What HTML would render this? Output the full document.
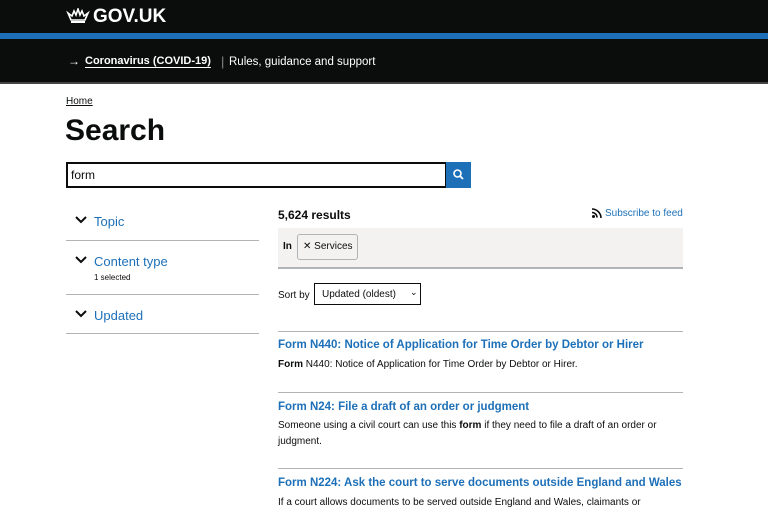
<!DOCTYPE html>
<html><head><style>
*{margin:0;padding:0;box-sizing:border-box}
body{width:768px;height:512px;overflow:hidden;background:#fff;font-family:"Liberation Sans",sans-serif;color:#0b0c0c;position:relative}
.a{position:absolute;white-space:nowrap}
.l{color:#1d70b8}
</style></head><body>
<div class="a" style="left:0;top:0;width:768px;height:33px;background:#0b0c0c"></div>
<div class="a" style="left:0;top:33px;width:768px;height:6px;background:#1d70b8"></div>
<div class="a" style="left:0;top:39px;width:768px;height:45px;background:#0b0c0c"></div>
<div class="a" style="left:0;top:82px;width:768px;height:2px;background:#444"></div>
<svg class="a" style="left:66px;top:8px" width="24" height="16" viewBox="0 0 24 16"><path d="M2 5l3 7h14l3-7-4 3-2-5-2 4-2-6-2 6-2-4-2 5z" fill="none" stroke="#fff" stroke-width="1.6"/><rect x="5" y="13" width="14" height="2" fill="#fff"/></svg>
<div class="a" style="left:93px;top:6px;color:#fff;font-weight:bold;font-size:19px">GOV.UK</div>
<div class="a" style="left:68px;top:54px;color:#fff;font-size:12px">→</div>
<div class="a" style="left:85px;top:55px;color:#fff;font-size:11px;font-weight:bold;text-decoration:underline;text-underline-offset:3px">Coronavirus (COVID-19)</div>
<div class="a" style="left:221px;top:54px;color:#888;font-size:13px">|</div>
<div class="a" style="left:229px;top:56px;color:#fff;font-size:11.5px">Rules, guidance and support</div>
<div class="a" style="left:66px;top:96px;font-size:10px;text-decoration:underline">Home</div>
<div class="a" style="left:65px;top:114px;font-size:30px;font-weight:bold">Search</div>
<div class="a" style="left:66px;top:162px;width:381px;height:26px;border:2px solid #0b0c0c"></div>
<div class="a" style="left:71px;top:168px;font-size:12px">form</div>
<div class="a" style="left:446px;top:162px;width:25px;height:26px;background:#1d70b8"></div>
<svg class="a" style="left:452px;top:168px" width="13" height="13" viewBox="0 0 13 13"><circle cx="5.5" cy="5.5" r="3.5" fill="none" stroke="#fff" stroke-width="1.6"/><path d="M8 8l3 3" stroke="#fff" stroke-width="1.8"/></svg>
<svg class="a" style="left:75px;top:216px" width="12" height="8"><path d="M1 1l5 5 5-5" fill="none" stroke="#0b0c0c" stroke-width="2"/></svg>
<div class="a l" style="left:94px;top:214px;font-size:13px">Topic</div>
<div class="a" style="left:66px;top:240px;width:193px;height:1px;background:#b1b4b6"></div>
<svg class="a" style="left:75px;top:256px" width="12" height="8"><path d="M1 1l5 5 5-5" fill="none" stroke="#0b0c0c" stroke-width="2"/></svg>
<div class="a l" style="left:94px;top:254px;font-size:13px">Content type</div>
<div class="a" style="left:94px;top:273px;font-size:8px">1 selected</div>
<div class="a" style="left:66px;top:294px;width:193px;height:1px;background:#b1b4b6"></div>
<svg class="a" style="left:75px;top:310px" width="12" height="8"><path d="M1 1l5 5 5-5" fill="none" stroke="#0b0c0c" stroke-width="2"/></svg>
<div class="a l" style="left:94px;top:308px;font-size:13px">Updated</div>
<div class="a" style="left:66px;top:333px;width:193px;height:1px;background:#b1b4b6"></div>
<div class="a" style="left:278px;top:208px;font-size:12px;font-weight:bold">5,624 results</div>
<svg class="a" style="left:592px;top:208px" width="10" height="10" viewBox="0 0 10 10"><circle cx="1.5" cy="8.5" r="1.5" fill="#0b0c0c"/><path d="M0 4.5a5 5 0 0 1 5 5M0 1a9 9 0 0 1 9 9" fill="none" stroke="#0b0c0c" stroke-width="1.6"/></svg>
<div class="a l" style="left:605px;top:208px;font-size:10px">Subscribe to feed</div>
<div class="a" style="left:278px;top:228px;width:405px;height:41px;background:#f3f2f1;border-bottom:2px solid #b1b4b6"></div>
<div class="a" style="left:283px;top:241px;font-size:10px;font-weight:bold">In</div>
<div class="a" style="left:297px;top:234px;width:61px;height:26px;border:1px solid #b1b4b6;border-radius:3px;background:#f3f2f1"></div>
<div class="a" style="left:303px;top:241px;font-size:10px">✕ Services</div>
<div class="a" style="left:278px;top:290px;font-size:10px">Sort by</div>
<div class="a" style="left:314px;top:283px;width:107px;height:22px;border:1.5px solid #0b0c0c"></div>
<div class="a" style="left:322px;top:289px;font-size:10px">Updated (oldest)</div>
<div class="a" style="left:410px;top:287px;font-size:9px">⌄</div>
<div class="a" style="left:278px;top:331px;width:405px;height:1px;background:#b1b4b6"></div>
<div class="a l" style="left:278px;top:339px;font-size:11.5px;font-weight:bold">Form N440: Notice of Application for Time Order by Debtor or Hirer</div>
<div class="a" style="left:278px;top:359px;font-size:10px"><b>Form</b> N440: Notice of Application for Time Order by Debtor or Hirer.</div>
<div class="a" style="left:278px;top:392px;width:405px;height:1px;background:#b1b4b6"></div>
<div class="a l" style="left:278px;top:401px;font-size:11.5px;font-weight:bold">Form N24: File a draft of an order or judgment</div>
<div class="a" style="left:278px;top:420px;font-size:10px">Someone using a civil court can use this <b>form</b> if they need to file a draft of an order or</div>
<div class="a" style="left:278px;top:436px;font-size:10px">judgment.</div>
<div class="a" style="left:278px;top:468px;width:405px;height:1px;background:#b1b4b6"></div>
<div class="a l" style="left:278px;top:477px;font-size:11.5px;font-weight:bold">Form N224: Ask the court to serve documents outside England and Wales</div>
<div class="a" style="left:278px;top:497px;font-size:10px">If a court allows documents to be served outside England and Wales, claimants or</div>
</body></html>
